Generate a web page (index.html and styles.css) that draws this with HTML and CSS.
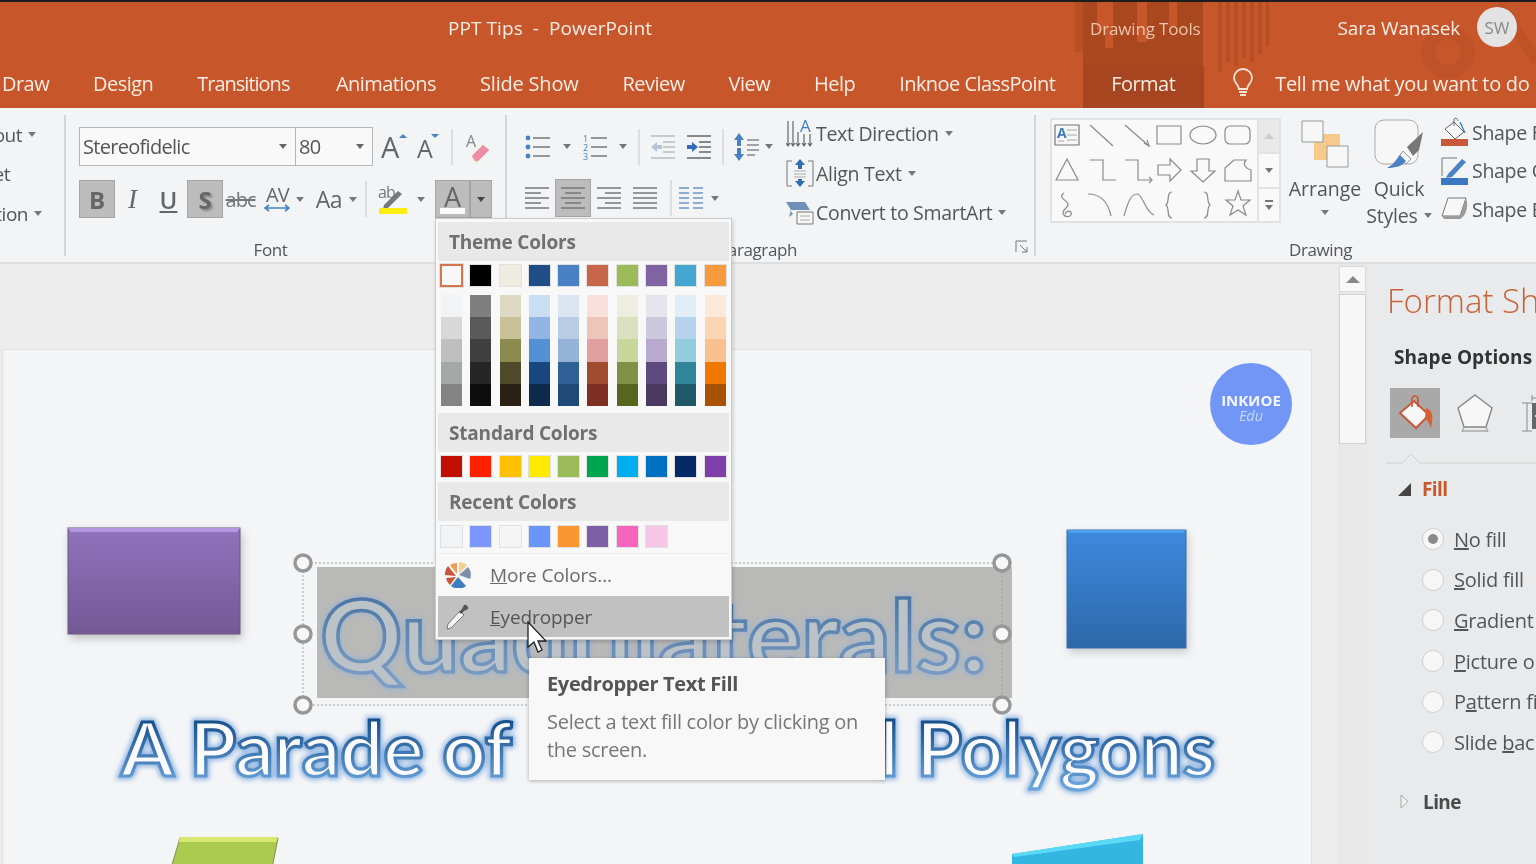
FILE: index.html
```html
<!DOCTYPE html>
<html lang="en">
<head>
<meta charset="utf-8">
<title>PPT Tips - PowerPoint</title>
<link rel="stylesheet" href="styles.css">
</head>
<body>
<div class="app">
  <header class="head">
    <svg class="head-art" width="1536" height="106" viewBox="0 0 1536 106">
      <path fill="#a9471f" d="M1083 64V0h14v28h8v18h8V0h24v40h10V0h22v24h8V0h26v64h0v42h-120z"/>
      <path fill="#b84f24" d="M1075 0h8v50h-8zM1218 0h4v70h-4zM1226 0h4v60h-4zM1234 0h4v64h-4zM1242 0h4v56h-4zM1250 0h4v60h-4zM1258 0h4v52h-4zM1266 0h3v44h-3z"/>
      <circle cx="1448" cy="50" r="20" fill="none" stroke="#bf5327" stroke-width="14"/>
      <path fill="none" stroke="#bf5327" stroke-width="10" d="M1500 0l36 60"/>
    </svg>
    <div class="title-row">
      <span class="doc-title">PPT Tips&nbsp; -&nbsp; PowerPoint</span>
      <span class="tools-title">Drawing Tools</span>
      <span class="user">Sara Wanasek</span>
      <span class="avatar">SW</span>
    </div>
    <nav class="tab-row">
      <span class="tab">Draw</span>
      <span class="tab">Design</span>
      <span class="tab tab-trans">Transitions</span>
      <span class="tab">Animations</span>
      <span class="tab tab-show">Slide Show</span>
      <span class="tab">Review</span>
      <span class="tab">View</span>
      <span class="tab">Help</span>
      <span class="tab">Inknoe ClassPoint</span>
      <span class="tab tab-format">Format</span>
      <svg class="bulb" width="22" height="30" viewBox="0 0 22 30"><path fill="none" stroke="#f6e3d8" stroke-width="1.8" d="M7 21c0-4-5-6-5-11a9 9 0 0 1 18 0c0 5-5 7-5 11zM7 24h8M8 27h6"/></svg>
      <span class="tell">Tell me what you want to do</span>
    </nav>
  </header>

  <section class="ribbon">
    <div class="group g-slides">
      <div class="clip-row r1"><span>Layout</span><i class="caret"></i></div>
      <div class="clip-row r2"><span>Reset</span></div>
      <div class="clip-row r3"><span>Section</span><i class="caret"></i></div>
    </div>

    <div class="group g-font">
      <div class="font-rows">
        <div class="row font-row1">
          <div class="combo combo-name"><span>Stereofidelic</span><i class="caret"></i></div>
          <div class="combo combo-size"><span>80</span><i class="caret"></i></div>
          <svg class="ico grow" width="76" height="36" viewBox="0 0 76 36">
            <text x="6" y="29" class="big-a">A</text><path fill="#4a80c4" d="M24 9l4-4 4 4z"/>
            <text x="42" y="29" class="mid-a">A</text><path fill="#4a80c4" d="M56 5h8l-4 4z"/>
          </svg>
          <span class="vsep sep-clear"></span>
          <svg class="ico" width="34" height="34" viewBox="0 0 34 34">
            <text x="7" y="17" class="small-a">A</text>
            <path fill="#f08aa8" stroke="#e9b3a0" d="M13 26l11-11 6 5-11 11h-3z"/>
          </svg>
        </div>
        <div class="row font-row2">
          <span class="btn on b-b">B</span>
          <span class="btn b-i">I</span>
          <span class="btn b-u">U</span>
          <span class="btn on b-s">S</span>
          <span class="btn b-abc">abc</span>
          <svg class="ico spacing" width="34" height="36" viewBox="0 0 34 36">
            <text x="8" y="21" class="av">AV</text>
            <path fill="none" stroke="#4a80c4" stroke-width="1.6" d="M7 27h24M11 24l-4 3 4 3M27 24l4 3-4 3"/>
          </svg>
          <i class="caret c-av"></i>
          <span class="btn b-aa">Aa</span>
          <i class="caret c-aa"></i>
          <span class="vsep sep-high"></span>
          <svg class="ico high" width="38" height="36" viewBox="0 0 38 36">
            <text x="7" y="17" class="ab">ab</text>
            <path fill="#777" d="M13 24l14-14 4 3-14 14-5 1z"/>
            <path fill="#ffee10" d="M8 27h28v6H8z"/>
          </svg>
          <i class="caret c-high"></i>
          <span class="btn on b-a"><span class="a-let">A</span><i class="a-bar"></i></span>
          <span class="btn on b-drop"><i class="caret"></i></span>
        </div>
      </div>
      <div class="glabel font-label">Font</div>
    </div>

    <div class="group g-para">
      <div class="para-cols">
        <div class="para-left">
          <div class="row para-row1">
            <svg class="ico" width="26" height="26" viewBox="0 0 26 26"><g fill="#4a80c4"><circle cx="3" cy="4" r="2.4"/><circle cx="3" cy="13" r="2.4"/><circle cx="3" cy="22" r="2.4"/></g><path stroke="#777" stroke-width="1.3" d="M8 4h17M8 13h17M8 22h17"/></svg>
            <i class="caret c-list"></i>
            <svg class="ico" width="26" height="28" viewBox="0 0 26 28"><g class="num"><text x="1" y="9">1</text><text x="1" y="18">2</text><text x="1" y="27">3</text></g><path stroke="#777" stroke-width="1.3" d="M9 5h16M9 14h16M9 23h16"/></svg>
            <i class="caret c-num"></i>
            <span class="vsep sep-ind"></span>
            <svg class="ico" width="26" height="26" viewBox="0 0 26 26"><path stroke="#bbb" stroke-width="1.3" d="M1 2h24M13 8h12M13 13h12M13 18h12M1 24h24"/><path fill="#b5c4d8" d="M1 13l6-5v3h5v4H7v3z"/></svg>
            <svg class="ico i-indent" width="26" height="26" viewBox="0 0 26 26"><path stroke="#666" stroke-width="1.3" d="M1 2h24M13 8h12M13 13h12M13 18h12M1 24h24"/><path fill="#2f6db5" d="M12 13l-6-5v3H1v4h5v3z"/></svg>
            <span class="vsep sep-sp"></span>
            <svg class="ico" width="26" height="30" viewBox="0 0 26 30"><path fill="#4a80c4" d="M5 1l5 7H7v6H3V8H0zM5 29l5-7H7v-6H3v6H0z"/><path stroke="#888" stroke-width="1.3" d="M13 8h12M13 13h12M13 18h12M13 23h8"/></svg>
            <i class="caret c-sp"></i>
          </div>
          <div class="row para-row2">
            <span class="al"><svg width="24" height="26" viewBox="0 0 24 26"><path stroke="#777" stroke-width="1.3" d="M0 3h24M0 8h16M0 13h24M0 18h16M0 23h24"/></svg></span>
            <span class="al al-on"><svg width="24" height="26" viewBox="0 0 24 26"><path stroke="#777" stroke-width="1.3" d="M0 3h24M4 8h16M0 13h24M4 18h16M0 23h24"/></svg></span>
            <span class="al"><svg width="24" height="26" viewBox="0 0 24 26"><path stroke="#777" stroke-width="1.3" d="M0 3h24M8 8h16M0 13h24M8 18h16M0 23h24"/></svg></span>
            <span class="al"><svg width="24" height="26" viewBox="0 0 24 26"><path stroke="#777" stroke-width="1.3" d="M0 3h24M0 8h24M0 13h24M0 18h24M0 23h24"/></svg></span>
            <span class="vsep sep-col"></span>
            <svg class="ico" width="24" height="26" viewBox="0 0 24 26"><path stroke="#6c93c8" stroke-width="1.3" d="M0 3h10M14 3h10M0 8h10M14 8h10M0 13h10M14 13h10M0 18h10M14 18h10M0 23h10M14 23h10"/></svg>
            <i class="caret c-col"></i>
          </div>
        </div>
        <div class="para-right">
          <div class="cmd">
            <svg class="ico" width="28" height="28" viewBox="0 0 28 28"><path stroke="#666" stroke-width="1.2" fill="none" d="M2 1v24M7 1v24M12 12v13M18 14v11M24 14v11M0 23l2 3 2-3M5 23l2 3 2-3M10 23l2 3 2-3M16 23l2 3 2-3M22 23l2 3 2-3"/><text x="14" y="12" class="td">A</text></svg>
            <span>Text Direction</span><i class="caret"></i>
          </div>
          <div class="cmd">
            <svg class="ico" width="28" height="28" viewBox="0 0 28 28"><path fill="none" stroke="#777" d="M6 2H1v25h5M22 2h5v25h-5"/><path stroke="#aaa" d="M8 12h12M8 15h12M8 18h12"/><path fill="#2f6db5" d="M14 0l5 6h-3v4h-4V6H9zM14 28l5-6h-3v-2h-4v2H9z"/></svg>
            <span>Align Text</span><i class="caret"></i>
          </div>
          <div class="cmd">
            <svg class="ico" width="28" height="24" viewBox="0 0 28 24"><path fill="#6f90b8" d="M0 1h19l5 8H4l3 4-4 3 2-7z"/><path fill="#f7f7f8" stroke="#777" d="M11 11h16v12H11z"/><path stroke="#aaa" d="M14 15h10M14 19h10"/></svg>
            <span>Convert to SmartArt</span><i class="caret"></i>
          </div>
        </div>
      </div>
      <div class="glabel para-label">Paragraph</div>
      <svg class="launcher" width="14" height="14" viewBox="0 0 14 14"><path fill="none" stroke="#777" d="M1 12V1h11M5 5l7 7M12 7v5H7"/></svg>
    </div>

    <div class="group g-draw">
      <div class="draw-cols">
        <div class="gallery">
          <svg class="shapes" width="205" height="104" viewBox="0 0 205 104">
            <g fill="none" stroke="#8a8a8a" stroke-width="1.2">
              <path fill="#f7f7f8" stroke="#777" d="M5 7h24v20H5z"/><path stroke="#aaa" d="M17 12h10M17 17h10M17 22h10M8 23h6"/>
              <path d="M40 7l23 21M75 7l24 21"/><path d="M94 25l5 3-2-6"/>
              <path d="M107 8h24v18h-24z"/><ellipse cx="153" cy="17" rx="13" ry="9"/><rect x="175" y="8" width="25" height="18" rx="5"/>
              <path d="M17 41l11 21H6z"/><path d="M40 42h13v20h13M75 42h13v20h14"/><path d="M99 59l3 3-3 3"/>
              <path d="M108 47h12v-6l11 11-11 11v-6h-12z"/><path d="M147 41h12v12h6l-12 11-12-11h6z"/><path d="M175 50l9-8h12c-3 3-2 8 5 10v11h-26z"/>
              <path d="M14 75c-9 6 10 8 2 15-7 6 0 10 4 8 4-3-2-8-5-2"/><path d="M38 76c12 0 20 8 23 22M74 98c4-14 7-22 13-22 6 0 8 18 17 21"/>
              <path d="M122 74c-6 0-2 10-6 13 4 3 0 13 6 13M154 74c6 0 2 10 6 13-4 3 0 13-6 13"/>
              <path d="M188 73l3 9h9l-7 6 3 9-8-5-8 5 3-9-7-6h9z"/>
            </g>
            <text x="7" y="20" class="gal-a">A</text>
          </svg>
          <div class="gal-scroll">
            <span class="gs gs-up"><i class="tri-up"></i></span>
            <span class="gs"><i class="caret"></i></span>
            <span class="gs gs-more"><i class="more-bar"></i><i class="caret"></i></span>
          </div>
        </div>
        <div class="bigcmd arrange">
          <svg width="50" height="52" viewBox="0 0 50 52"><path fill="#f7c98a" d="M14 15h26v26H14z"/><path fill="#f7f7f8" stroke="#999" d="M2 2h21v21H2zM27 27h21v21H27z"/></svg>
          <span>Arrange</span><i class="caret"></i>
        </div>
        <div class="bigcmd quick">
          <svg width="52" height="52" viewBox="0 0 52 52"><rect x="2" y="1" width="43" height="44" rx="9" fill="#f7f7f8" stroke="#aaa"/><path fill="#777" d="M34 28l16-15-4 18-6 6z"/><path fill="#f7f7f8" stroke="#999" d="M30 32l8 8-5 5-8-6z"/><path fill="#4a80c4" d="M27 36l6 6c-4 5-10 7-19 7 6-3 9-8 13-13z"/></svg>
          <span>Quick</span><span class="st">Styles<i class="caret"></i></span>
        </div>
        <div class="shape-cmds">
          <div class="scmd">
            <svg width="28" height="30" viewBox="0 0 28 30"><path fill="#f7f7f8" stroke="#666" d="M14 5l10 10-9 7-10-10z"/><path fill="none" stroke="#666" d="M14 9V3c0-3 4-2 4 1"/><path stroke="#4a80c4" fill="none" stroke-width="1.4" d="M20 5l5 11"/><path fill="#c9583a" d="M1 22h27v7H1z"/></svg>
            <span>Shape Fill</span>
          </div>
          <div class="scmd">
            <svg width="28" height="30" viewBox="0 0 28 30"><path fill="none" stroke="#777" d="M2 20V2h15"/><path fill="#4a80c4" d="M8 18l14-15 4 3-14 15-6 1z"/><path fill="#3a78c4" d="M1 22h27v7H1z"/></svg>
            <span>Shape Outline</span>
          </div>
          <div class="scmd">
            <svg width="28" height="30" viewBox="0 0 28 30"><path fill="#f7f7f8" stroke="#777" d="M8 4h18l-6 18H2z"/><path fill="#9c9c9c" d="M26 4c3 8 0 18-6 21H4l-2-3h18z"/></svg>
            <span>Shape Effects</span>
          </div>
        </div>
      </div>
      <div class="glabel draw-label">Drawing</div>
    </div>
  </section>

  <main class="work">
    <div class="stage">
      <div class="slide">
        <svg class="canvas" width="1308" height="514" viewBox="3 350 1308 514">
          <defs>
            <linearGradient id="gp" x1="0" y1="0" x2="0" y2="1"><stop offset="0" stop-color="#9172bd"/><stop offset="1" stop-color="#745896"/></linearGradient>
            <linearGradient id="gb" x1="0" y1="0" x2="0" y2="1"><stop offset="0" stop-color="#3d8ade"/><stop offset="1" stop-color="#2c68a9"/></linearGradient>
            <linearGradient id="gs1" gradientUnits="userSpaceOnUse" x1="0" y1="720" x2="0" y2="785"><stop offset="0" stop-color="#174f8a"/><stop offset="1" stop-color="#6aa2dc"/></linearGradient>
            <linearGradient id="gs2" gradientUnits="userSpaceOnUse" x1="0" y1="595" x2="0" y2="680"><stop offset="0" stop-color="#4a75a4"/><stop offset="1" stop-color="#7c9dc4"/></linearGradient>
            <filter id="soft" x="-10%" y="-10%" width="120%" height="120%"><feGaussianBlur stdDeviation="5"/></filter>
            <filter id="glow" x="-5%" y="-20%" width="110%" height="140%"><feGaussianBlur stdDeviation="2.5"/></filter>
          </defs>
          <rect x="70" y="532" width="172" height="106" fill="#bbb" filter="url(#soft)"/>
          <rect x="68" y="528" width="172" height="106" fill="url(#gp)" stroke="#6b5a80"/>
          <path fill="#b596e0" d="M68 528h172l-3 4H71z"/>
          <rect x="1069" y="534" width="119" height="118" fill="#c4c6ca" filter="url(#soft)"/>
          <rect x="1067" y="530" width="119" height="118" fill="url(#gb)" stroke="#3a6ea5"/>
          <path fill="#4da0ee" d="M1067 530h119l-3 3h-113z"/>
          <path fill="#aacb50" stroke="#8a8a50" d="M180 838h98l-6 30H171z"/>
          <path fill="#d8e870" d="M180 837h98l-2 5H179z"/>
          <path fill="#33b6e2" d="M1012 854l131-20v34h-131z"/>
          <path fill="#5cd9f6" d="M1012 854l131-20-3 6-126 17z"/>

          <rect class="sel-fill" x="317" y="567" width="695" height="131"/>
          <text class="h1 h1-glow" x="320" y="672" textLength="667" lengthAdjust="spacingAndGlyphs" filter="url(#glow)">Quadrilaterals:</text>
          <text class="h1" x="320" y="672" textLength="667" lengthAdjust="spacingAndGlyphs">Quadrilaterals:</text>
          <rect class="sel-line" x="303" y="563" width="699" height="142"/>
          <g class="handles">
            <circle cx="303" cy="563" r="8"/><circle cx="1002" cy="563" r="8"/>
            <circle cx="303" cy="634" r="8"/><circle cx="1002" cy="634" r="8"/>
            <circle cx="303" cy="705" r="8"/><circle cx="1002" cy="705" r="8"/>
          </g>

          <g class="h2">
            <text class="h2-glow" x="121" y="776" textLength="391" lengthAdjust="spacingAndGlyphs" filter="url(#glow)">A Parade of</text>
            <text x="121" y="776" textLength="391" lengthAdjust="spacingAndGlyphs">A Parade of</text>
            <text class="h2-glow" x="880" y="776" textLength="335" lengthAdjust="spacingAndGlyphs" filter="url(#glow)">l Polygons</text>
            <text x="880" y="776" textLength="335" lengthAdjust="spacingAndGlyphs">l Polygons</text>
          </g>
        </svg>
        <div class="logo"><span class="logo-name">INK<span class="flip">N</span>OE</span><span class="logo-sub">Edu</span></div>
      </div>
    </div>

    <div class="vscroll">
      <span class="vs-btn"><i class="tri-up dark"></i></span>
      <span class="vs-thumb"></span>
    </div>

    <aside class="pane">
      <h2 class="pane-title">Format Shape</h2>
      <div class="pane-sub">Shape Options</div>
      <div class="pane-icons">
        <span class="pi pi-on"><svg width="40" height="40" viewBox="0 0 40 40"><path fill="#f7f7f8" stroke="#c9583a" stroke-width="2" d="M19 8l15 14-13 13L5 20z"/><path fill="none" stroke="#c9583a" stroke-width="1.6" d="M17 14V6c0-4 6-4 6 0v8"/><path fill="#d8602f" d="M31 15c6 2 8 7 5 20-2-5-3-7-6-10z"/></svg></span>
        <span class="pi"><svg width="38" height="40" viewBox="0 0 38 40"><path fill="#f7f7f8" stroke="#888" stroke-width="1.4" d="M19 2l17 13-6 19H8L2 15z"/><path stroke="#aaa" fill="none" stroke-width="1.4" d="M8 34l-2 5M30 34l2 5M6 38h26"/></svg></span>
        <span class="pi pi-3"><svg width="30" height="40" viewBox="0 0 30 40"><path stroke="#888" fill="none" d="M2 10h10M7 10v28M2 38h10M12 2v6M12 5h18"/><path fill="#666" d="M12 10h18v26H12z"/><path stroke="#fff" stroke-width="1.5" d="M15 23h12"/></svg></span>
      </div>
      <svg class="pane-rule" width="168" height="12" viewBox="0 0 168 12"><path fill="none" stroke="#cfcfcf" d="M0 11h16l9-9 9 9h134"/></svg>
      <div class="sec"><i class="tri-open"></i><span class="sec-fill">Fill</span></div>
      <div class="opts">
        <div class="opt"><i class="radio on"></i><span><u>N</u>o fill</span></div>
        <div class="opt"><i class="radio"></i><span><u>S</u>olid fill</span></div>
        <div class="opt"><i class="radio"></i><span><u>G</u>radient fill</span></div>
        <div class="opt"><i class="radio"></i><span><u>P</u>icture or texture fill</span></div>
        <div class="opt"><i class="radio"></i><span>P<u>a</u>ttern fill</span></div>
        <div class="opt"><i class="radio"></i><span>Slide <u>b</u>ackground fill</span></div>
      </div>
      <div class="sec sec-line"><svg class="tri-closed" width="9" height="15" viewBox="0 0 9 15"><path fill="#f1f1f2" stroke="#aaa" d="M1 1l7 6.5L1 14z"/></svg><span class="sec-name">Line</span></div>
    </aside>
  </main>

  <div class="popup">
    <div class="pop-h">Theme Colors</div>
    <div class="sw-row sw-theme">
      <i class="sw sw-sel" style="background:#f7f7f7"></i><i class="sw" style="background:#000"></i><i class="sw" style="background:#eeece1"></i><i class="sw" style="background:#1f4e87"></i><i class="sw" style="background:#4a80c4"></i><i class="sw" style="background:#c9654a"></i><i class="sw" style="background:#9bbb59"></i><i class="sw" style="background:#8064a2"></i><i class="sw" style="background:#43a7d1"></i><i class="sw" style="background:#f79a3e"></i>
    </div>
    <div class="tints">
      <div class="tc"><i style="background:#f2f3f5"></i><i style="background:#d8d8d8"></i><i style="background:#bfbfbf"></i><i style="background:#a6a8a8"></i><i style="background:#838383"></i></div>
      <div class="tc"><i style="background:#7f7f7f"></i><i style="background:#595959"></i><i style="background:#404040"></i><i style="background:#262626"></i><i style="background:#0d0d0d"></i></div>
      <div class="tc"><i style="background:#ddd9c3"></i><i style="background:#c9c198"></i><i style="background:#8b8a4f"></i><i style="background:#4f4a2a"></i><i style="background:#2a2013"></i></div>
      <div class="tc"><i style="background:#c9def2"></i><i style="background:#91b5e4"></i><i style="background:#5490d4"></i><i style="background:#1a467f"></i><i style="background:#0e2a4c"></i></div>
      <div class="tc"><i style="background:#dbe5f1"></i><i style="background:#b8cce4"></i><i style="background:#95b3d7"></i><i style="background:#2f6196"></i><i style="background:#1f4a78"></i></div>
      <div class="tc"><i style="background:#f9e0dd"></i><i style="background:#ecc6b8"></i><i style="background:#e19f9f"></i><i style="background:#a24c2f"></i><i style="background:#7f2e22"></i></div>
      <div class="tc"><i style="background:#eeeee0"></i><i style="background:#dbe0c0"></i><i style="background:#c8d79b"></i><i style="background:#7e9144"></i><i style="background:#57651f"></i></div>
      <div class="tc"><i style="background:#e5e3ec"></i><i style="background:#ccc9dc"></i><i style="background:#b8a9d0"></i><i style="background:#5f4a80"></i><i style="background:#4a3a62"></i></div>
      <div class="tc"><i style="background:#e1edf7"></i><i style="background:#b7d3ec"></i><i style="background:#93cddd"></i><i style="background:#31859b"></i><i style="background:#215868"></i></div>
      <div class="tc"><i style="background:#fde9d9"></i><i style="background:#fcd5b4"></i><i style="background:#fac08f"></i><i style="background:#f07800"></i><i style="background:#a85100"></i></div>
    </div>
    <div class="pop-h">Standard Colors</div>
    <div class="sw-row">
      <i class="sw" style="background:#c00f00"></i><i class="sw" style="background:#ff2000"></i><i class="sw" style="background:#ffc000"></i><i class="sw" style="background:#ffeb00"></i><i class="sw" style="background:#9bbb59"></i><i class="sw" style="background:#00a550"></i><i class="sw" style="background:#00aeef"></i><i class="sw" style="background:#0070c0"></i><i class="sw" style="background:#062a66"></i><i class="sw" style="background:#7f3fa8"></i>
    </div>
    <div class="pop-h">Recent Colors</div>
    <div class="sw-row sw-recent">
      <i class="sw" style="background:#f2f3f5"></i><i class="sw" style="background:#7b97ff"></i><i class="sw" style="background:#f4f5f7"></i><i class="sw" style="background:#6a96fb"></i><i class="sw" style="background:#fb9630"></i><i class="sw" style="background:#7e5ea6"></i><i class="sw" style="background:#f865bf"></i><i class="sw" style="background:#f7c6e6"></i>
    </div>
    <div class="pop-item">
      <svg width="26" height="26" viewBox="0 0 26 26"><path fill="#ec9a56" d="M12 12L5 3a12 12 0 0 1 7-2z"/><path fill="#f6cf8e" d="M14 12V0a12 12 0 0 1 8 3z"/><path fill="#c9583a" d="M11 14L0 13a12 12 0 0 1 3-9z"/><path fill="#7c8fa8" d="M14 13l9-8a12 12 0 0 1 2 12z"/><path fill="#c9583a" d="M11 15L1 16a12 12 0 0 0 4 7z"/><path fill="#3f7cc0" d="M13 15l-7 9a12 12 0 0 0 15 0z"/></svg>
      <span><u>M</u>ore Colors...</span>
    </div>
    <div class="pop-item pop-hover">
      <svg width="26" height="26" viewBox="0 0 26 26"><path fill="#f7f7f8" stroke="#777" d="M15 7l4 4L6 24l-4 1 1-5z"/><path fill="#555" d="M14 8l3-3 2-4c2-1 5 2 4 4l-4 2-3 3z"/></svg>
      <span><u>E</u>yedropper</span>
    </div>
  </div>

  <div class="tip">
    <div class="tip-t">Eyedropper Text Fill</div>
    <div class="tip-b">Select a text fill color by clicking on the screen.</div>
  </div>

  <svg class="cursor" width="24" height="34" viewBox="0 0 24 34"><path fill="#fff" stroke="#222" stroke-width="1.3" d="M2 1v25l6-5 4 10 4-2-4-9h8z"/></svg>
</div>
</body>
</html>
```

FILE: styles.css
```css
* { box-sizing: border-box; }
html, body { margin: 0; height: 100%; overflow: hidden; }
body { font-family: "Open Sans", "Noto Sans", "Liberation Sans", sans-serif; color: #555; }
i { font-style: normal; display: block; }

.app { position: relative; width: 1536px; height: 864px; overflow: hidden; display: flex; flex-direction: column; background: #ededed; filter: blur(0.45px); }

/* title bar and tabs */
.head { position: relative; flex: 0 0 108px; background: #c7572a; border-top: 2px solid #1c1c1c; color: #f8ece5; }
.head-art { position: absolute; left: 0; top: 0; }
.title-row { position: relative; height: 64px; display: flex; align-items: center; padding-bottom: 12px; font-size: 19px; letter-spacing: 0.08px; }
.doc-title { margin-left: 448px; }
.tools-title { margin-left: 438px; font-size: 17px; letter-spacing: -0.15px; color: #eec5ab; }
.user { margin-left: 137px; letter-spacing: -0.15px; }
.avatar { margin: -2px 0 0 17px; width: 40px; height: 40px; border-radius: 50%; background: #e3e3e3; color: #8a8a8a; font-size: 17px; letter-spacing: 0; display: flex; align-items: center; justify-content: center; }
.tab-row { position: relative; height: 42px; display: flex; align-items: center; gap: 44px; padding: 0 0 8px 2px; font-size: 20px; letter-spacing: -0.55px; }
.tab-trans { letter-spacing: -1px; margin-right: 2.5px; }
.tab-show { letter-spacing: -0.2px; }
.tab-format { background: #a6451f; height: 42px; display: flex; align-items: center; padding: 0 29px 8px 28px; margin: 8px -44px 0 -16px; }
.bulb { margin-left: 28px; margin-right: -23px; }
.tell { letter-spacing: -0.33px; white-space: nowrap; }

/* ribbon */
.ribbon { flex: 0 0 156px; display: flex; background: #f3f4f6; border-bottom: 2px solid #dfdfe0; overflow: hidden; }
.group { position: relative; flex: none; height: 141px; margin-top: 7px; border-right: 2px solid #d4d5d6; display: flex; flex-direction: column; }
.g-slides { width: 66px; font-size: 19px; overflow: hidden; }
.clip-row { height: 39.5px; display: flex; align-items: center; justify-content: flex-end; gap: 6px; white-space: nowrap; letter-spacing: -0.5px; }
.r1 { margin-right: 28px; }
.r2 { margin-right: 54px; }
.r3 { margin-right: 22px; }
.caret { width: 0; height: 0; border: 4px solid transparent; border-top: 5px solid #777; border-bottom: 0; flex: none; }
.row { display: flex; align-items: center; }
.glabel { position: absolute; left: 0; right: 0; bottom: -5px; text-align: center; font-size: 17px; letter-spacing: -0.4px; }
.ico { flex: none; display: block; }
.vsep { width: 2px; background: #dcdddf; flex: none; height: 36px; }

.g-font { width: 441px; }
.font-label { right: 30px; }
.font-rows { padding: 12px 0 0 13px; }
.font-row1 { height: 39px; }
.combo { height: 39px; background: #f9f9fa; border: 1px solid #b5b6b8; display: flex; align-items: center; justify-content: space-between; font-size: 20px; letter-spacing: -0.7px; padding: 0 8px 0 3px; }
.combo-name { width: 217px; }
.combo-size { width: 78px; margin-left: -1px; }
.combo .caret { border-top-color: #666; }
.grow { margin-left: 2px; }
.big-a { font-size: 29px; fill: #666; }
.mid-a { font-size: 25px; fill: #666; }
.small-a { font-size: 16px; fill: #888; }
.sep-clear { margin: 0 6px 0 0; }
.font-row2 { height: 38px; margin-top: 14px; }
.btn { height: 38px; display: flex; align-items: center; justify-content: center; flex: none; font-size: 24px; }
.btn.on { background: #bcbcbc; border: 1px solid #a5a5a5; }
.b-b { width: 36px; font-weight: 700; color: #666; }
.b-i { width: 35px; font-style: italic; font-family: "Liberation Serif", serif; font-size: 27px; color: #666; }
.b-u { width: 37px; font-weight: 600; text-decoration: underline; color: #666; }
.b-s { width: 36px; font-weight: 700; color: #666; text-shadow: 2px 2px 2px #888; }
.b-abc { width: 35px; font-size: 20px; text-decoration: line-through; letter-spacing: -1px; color: #777; }
.av { font-size: 20px; fill: #666; letter-spacing: -1px; }
.c-av { margin: 0 6px 0 4px; }
.b-aa { width: 38px; font-size: 23px; letter-spacing: -0.5px; color: #666; }
.c-aa { margin: 0 8px 0 1px; }
.high { margin-left: 4px; }
.ab { font-size: 16px; fill: #777; letter-spacing: -1px; }
.c-high { margin: 0 10px 0 8px; }
.b-a { width: 35px; flex-direction: column; position: relative; font-size: 27px; color: #666; line-height: 1; padding-bottom: 6px; font-weight: 400; }
.a-bar { position: absolute; left: 4px; right: 4px; bottom: 3px; height: 6px; background: #fafafa; }
.b-drop { width: 22px; }
.b-drop .caret { border-top-color: #444; }

.g-para { width: 529px; }
.para-cols { display: flex; padding: 10px 0 0 18px; }
.para-left { width: 261px; }
.para-row1 { height: 42px; padding-top: 1px; }
.c-list { margin: 0 11px 0 12px; }
.c-num { margin: 0 11px 0 11px; }
.sep-ind { margin-right: 10px; }
.i-indent { margin-left: 10px; }
.sep-sp { margin: 0 10px; }
.c-sp { margin-left: 5px; }
.num text { font-size: 9px; fill: #4a80c4; }
.para-row2 { height: 38px; margin-top: 12px; }
.al { width: 36px; height: 38px; display: flex; align-items: center; justify-content: center; flex: none; }
.al:first-child { margin-left: -6px; }
.al-on { background: #bcbcbc; border: 1px solid #a5a5a5; }
.sep-col { margin: 0 7px 0 7px; height: 36px; }
.c-col { margin-left: 8px; }
.para-right { margin: -11px 0 0 0; display: flex; flex-direction: column; }
.cmd { height: 39.5px; display: flex; align-items: center; font-size: 19.5px; letter-spacing: -0.3px; gap: 6px; white-space: nowrap; }
.cmd span { margin-left: -4px; }
.cmd .caret { margin-left: 0; }
.td { font-size: 17px; fill: #3f7cc0; }
.para-label { right: 26px; }
.launcher { position: absolute; right: 5px; bottom: 2px; }

.g-draw { flex: 1; border-right: 0; width: 500px; }
.draw-cols { display: flex; padding: 3px 0 0 14px; }
.gallery { flex: none; width: 231px; height: 105px; display: flex; background: #f9f9fa; border: 2px solid #e1e2e3; }
.shapes { flex: none; transform: translate(-2px, -2px); }
.gal-a { font-size: 14px; font-weight: 700; fill: #3f7cc0; }
.gal-scroll { flex: 1; display: flex; flex-direction: column; border-left: 2px solid #e1e2e3; }
.gs { flex: 1; display: flex; flex-direction: column; gap: 3px; align-items: center; justify-content: center; border-bottom: 2px solid #e1e2e3; }
.gs:last-child { border-bottom: 0; }
.gs-up { background: #e9e9ea; }
.tri-up { width: 0; height: 0; border: 5px solid transparent; border-bottom: 6px solid #cfcfcf; border-top: 0; }
.tri-up.dark { border-width: 0 7px 7px; border-bottom-color: #888; }
.more-bar { width: 8px; height: 2px; background: #777; }
.bigcmd { flex: none; display: flex; flex-direction: column; align-items: center; font-size: 19.5px; letter-spacing: 0; line-height: 27px; padding-top: 1px; }
.bigcmd svg { margin-bottom: 4px; }
.arrange { width: 76px; margin-left: 6px; }
.arrange .caret { margin-top: 8px; }
.quick { width: 76px; margin-left: -2px; letter-spacing: -0.2px; }
.st { display: flex; align-items: center; gap: 6px; }
.shape-cmds { flex: none; display: flex; flex-direction: column; margin: -5px 0 0 3px; }
.scmd { height: 38.5px; display: flex; align-items: center; gap: 4px; font-size: 19.5px; letter-spacing: -0.3px; white-space: nowrap; }
.draw-label { text-align: left; left: 253px; right: auto; }

/* workspace */
.work { flex: 1; display: flex; min-height: 0; }
.stage { flex: 0 0 1338px; padding: 86px 0 0 3px; overflow: hidden; }
.slide { position: relative; width: 1308px; height: 530px; background: #f4f5f7; box-shadow: 0 0 0 1px #e1e1e2; }
.canvas { display: block; }
.sel-fill { fill: #b9b9b8; }
.sel-line { fill: none; stroke: #a3a3a3; stroke-dasharray: 2 2; }
.handles circle { fill: #f7f7f8; stroke: #979797; stroke-width: 3.5; }
.h1 { font-family: Lato, "Open Sans", sans-serif; font-weight: 700; font-size: 100px; fill: #bbc3c9; stroke: url(#gs2); stroke-width: 3.5; }
.h1-glow { stroke: #9fb4cc; stroke-width: 6; }
.h2 text { font-family: Lato, "Open Sans", sans-serif; font-weight: 700; font-size: 74px; fill: #fbfbfd; stroke: url(#gs1); stroke-width: 3.2; }
.h2 text.h2-glow { stroke: #8db4e0; stroke-width: 7; }
.logo { position: absolute; left: 1207px; top: 13px; width: 82px; height: 82px; border-radius: 50%; background: #7296f6; color: #f3f5ff; display: flex; flex-direction: column; align-items: center; justify-content: center; line-height: 1; padding-top: 8px; }
.logo-name { font-weight: 700; font-size: 15px; letter-spacing: 0; }
.flip { display: inline-block; transform: scaleX(-1); }
.logo-sub { font-style: italic; font-size: 14.5px; color: #c8d5fb; margin-top: 1px; }

.vscroll { flex: 0 0 30px; background: #e8e8e8; padding: 2px 2px 0 1px; display: flex; flex-direction: column; gap: 2px; }
.vs-btn { height: 26px; background: #f7f7f8; border: 1px solid #dcdcdc; display: flex; align-items: center; justify-content: center; }
.vs-thumb { height: 150px; background: #f7f7f8; border: 1px solid #d2d2d2; }

.pane { flex: 1; min-width: 0; background: #e9eaeb; overflow: hidden; white-space: nowrap; padding: 14px 0 0 19px; }
.pane-title { margin: 0; font-weight: 300; font-size: 33px; line-height: 46px; color: #c8623a; letter-spacing: 0; }
.pane-sub { margin: 20px 0 0 7px; font-size: 19px; font-weight: 700; line-height: 26px; color: #333; letter-spacing: 0.05px; }
.pane-icons { display: flex; margin: 18px 0 0 3px; align-items: center; height: 50px; }
.pi { width: 50px; height: 50px; display: flex; align-items: center; justify-content: center; flex: none; }
.pi-on { background: #a9a9a9; }
.pi + .pi { margin-left: 10px; }
.pi-3 { margin-left: 8px; }
.pane-rule { display: block; margin: 14px 0 0 -1px; }
.sec { display: flex; align-items: center; height: 28px; margin: 11px 0 0 11px; font-size: 19px; font-weight: 700; letter-spacing: -0.6px; }
.sec-fill { color: #c8572a; margin-left: 11px; }
.tri-open { width: 0; height: 0; border-style: solid; border-width: 0 0 13px 13px; border-color: transparent transparent #444 transparent; }
.opts { margin-top: 16px; }
.opt { height: 40.6px; display: flex; align-items: center; gap: 10px; padding-left: 35px; font-size: 20px; letter-spacing: -0.25px; color: #555; }
.radio { width: 22px; height: 22px; flex: none; border-radius: 50%; background: #f7f7f8; border: 1px solid #cfcfcf; position: relative; }
.radio.on::after { content: ""; position: absolute; inset: 5px; border-radius: 50%; background: #8a8a8a; }
.sec-line { margin: 25px 0 0 13px; }
.tri-closed { flex: none; }
.sec-name { margin-left: 14px; color: #4a4a4a; }

/* popups */
.popup { position: absolute; left: 435px; top: 218px; width: 297px; padding: 3px 2px 2px; background: #f8f8f9; border: 1px solid #cdcdce; box-shadow: 1px 2px 4px rgba(0,0,0,.18); }
.pop-h { height: 39px; background: #e9e9ea; display: flex; align-items: center; padding-left: 11px; font-size: 19px; font-weight: 700; letter-spacing: -0.2px; color: #707070; }
.sw-row { display: grid; grid-template-columns: repeat(10, 21px); column-gap: 8.3px; height: 30px; padding: 4px 0 0 3px; }
.sw { width: 21px; height: 21px; box-shadow: 0 0 0 1px rgba(150,150,150,.25); }
.sw-sel { border: 2px solid #d4754f; width: 23px; height: 23px; margin: -1px; }
.sw-theme { height: 34px; }
.sw-recent { height: 32px; padding-top: 5px; }
.tints { display: grid; grid-template-columns: repeat(10, 21px); column-gap: 8.3px; padding-left: 3px; height: 118px; }
.tc i { height: 22.2px; }
.pop-item { height: 43px; display: flex; align-items: center; padding-left: 7px; gap: 19px; font-size: 19px; letter-spacing: -0.1px; color: #6a6a6a; border-top: 1px solid #ececec; }
.pop-hover { background: #c1c1c1; color: #555; border-top: 0; height: 41px; }

.tip { position: absolute; left: 529px; top: 658px; width: 356px; height: 122px; padding: 12px 18px; background: #f8f8f9; box-shadow: 0 1px 4px rgba(0,0,0,.3); }
.tip-t { font-size: 20px; font-weight: 700; line-height: 28px; letter-spacing: -0.35px; color: #555; }
.tip-b { margin-top: 10px; font-size: 20px; line-height: 28px; letter-spacing: -0.28px; color: #777; }
.cursor { position: absolute; left: 526px; top: 621px; }
```
